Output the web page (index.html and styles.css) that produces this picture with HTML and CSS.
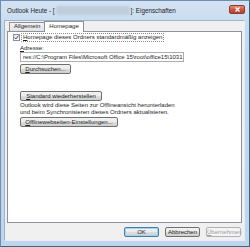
FILE: index.html
```html
<!DOCTYPE html>
<html>
<head>
<meta charset="utf-8">
<link rel="stylesheet" href="styles.css">
</head>
<body>
<div class="win">
  <div class="titlebar">
    <span class="title">Outlook Heute - [<span class="blur"></span>]: Eigenschaften</span>
    <div class="close"><svg width="9" height="5" viewBox="0 0 9 5"><path d="M2.5 0.5 L6.5 4.5 M6.5 0.5 L2.5 4.5" stroke="#fff" stroke-width="1.3"/></svg></div>
  </div>
  <div class="client">
    <div class="tabs">
      <div class="tab">Allgemein</div>
      <div class="tab active">Homepage</div>
    </div>
    <div class="panel">
      <div class="check">
        <span class="box"><svg width="5" height="5" viewBox="0 0 5 5"><path d="M0.6 2.6 L1.9 4 L4.4 0.7" stroke="#2b4ea8" stroke-width="1" fill="none"/></svg></span>
        <span class="focus"><u>H</u>omepage dieses Ordners standardmäßig anzeigen</span>
      </div>
      <div class="indent">
        <div class="lbl"><u>A</u>dresse:</div>
        <div class="input">res://C:\Program Files\Microsoft Office 15\root\office15\1031</div>
        <div class="btn b-browse"><u>D</u>urchsuchen...</div>
        <div class="btn b-std"><u>S</u>tandard wiederherstellen</div>
        <p class="info">Outlook wird diese Seiten zur Offlineansicht herunterladen<br>und beim Synchronisieren dieses Ordners aktualisieren.</p>
        <div class="btn b-off"><u>O</u>fflinewebseiten-Einstellungen...</div>
      </div>
    </div>
    <div class="footer">
      <div class="btn fbtn default">OK</div>
      <div class="btn fbtn">Abbrechen</div>
      <div class="btn fbtn disabled"><u>Ü</u>bernehmen</div>
    </div>
  </div>
</div>
</body>
</html>
```
FILE: styles.css
```css
html, body {
  margin: 0;
  padding: 0;
  width: 250px;
  height: 247px;
  overflow: hidden;
  background: #c7dbf0;
}
body {
  font-family: "Liberation Sans", Arial, sans-serif;
  font-size: 6px;
  color: #1e1e1e;
}
.win {
  box-sizing: border-box;
  width: 250px;
  height: 247px;
  border: 1px solid #6f8fae;
  border-right-color: #2f6e80;
  border-bottom-color: #2f6e80;
  background: linear-gradient(#d4e3f3, #c4d9ef 30px, #bfd5ed);
  display: flex;
  flex-direction: column;
  padding: 0 4px 5px 3px;
}
.titlebar {
  height: 19px;
  flex: none;
  display: flex;
  align-items: center;
  justify-content: space-between;
  padding-left: 3px;
}
.title {
  font-size: 6.3px;
  color: #1b1b1b;
  display: flex;
  align-items: center;
  margin-top: -1px;
}
.blur {
  display: inline-block;
  width: 74px;
  height: 9px;
  background: #bfcedd;
  border-radius: 2px;
  filter: blur(1px);
  margin: 0 1px;
}
.close {
  width: 14px;
  height: 7px;
  background: linear-gradient(#e6907f, #c9513d 55%, #b8412c);
  border: 1px solid #8a3a2e;
  border-radius: 2px;
  display: flex;
  align-items: center;
  justify-content: center;
  margin-top: -3px;
}
.client {
  flex: 1;
  background: #f0f0f0;
  border: 1px solid #9fb3c9;
  border-bottom-color: #e5eef7;
  border-right-color: #e5eef7;
  padding: 1px 2px 0 2px;
  display: flex;
  flex-direction: column;
}
.tabs {
  display: flex;
  height: 9px;
  padding-left: 2px;
  align-items: flex-end;
  position: relative;
  z-index: 1;
}
.tab {
  height: 8px;
  line-height: 7px;
  padding: 0 4px;
  border: 1px solid #8d929b;
  border-bottom: none;
  background: linear-gradient(#f2f2f2, #e3e3e3);
  font-size: 6px;
  margin-top: 1px;
}
.tab.active {
  height: 10px;
  background: #fff;
  margin-left: -1px;
  margin-bottom: -1px;
  padding: 0 4px;
  line-height: 9px;
}
.panel {
  flex: 1;
  background: #fff;
  border: 1px solid #8d929b;
  padding: 1px 5px;
}
.check {
  display: flex;
  align-items: center;
  height: 9px;
}
.box {
  width: 5px;
  height: 5px;
  border: 1px solid #8e8f8f;
  background: linear-gradient(#e8e8e8, #f8f8f8);
  display: flex;
  align-items: center;
  justify-content: center;
  margin-right: 1px;
}
.focus {
  border: 1px dotted #8a8a8a;
  padding: 0 1px;
  line-height: 7px;
}
.indent {
  padding-left: 7px;
}
.lbl {
  margin-top: 2px;
  height: 8px;
  line-height: 8px;
}
.input {
  width: 158px;
  height: 8px;
  line-height: 8px;
  border: 1px solid #abadb3;
  padding: 0 2px;
  white-space: nowrap;
  overflow: hidden;
}
.btn {
  box-sizing: border-box;
  height: 10px;
  line-height: 8px;
  border: 1px solid #707070;
  border-radius: 2px;
  background: linear-gradient(#f2f2f2, #ebebeb 50%, #dddddd 51%, #cfcfcf);
  text-align: center;
  font-size: 6px;
  white-space: nowrap;
}
.b-browse {
  width: 51px;
  margin-top: 2px;
}
.b-std {
  width: 82px;
  margin-top: 17px;
}
.info {
  margin: 1px 0 0 0;
  line-height: 7px;
}
.b-off {
  width: 98px;
  margin-top: 1px;
}
.footer {
  height: 17px;
  display: flex;
  justify-content: flex-end;
  align-items: center;
  gap: 6px;
  padding-right: 1px;
}
.fbtn {
  width: 35px;
}
.fbtn.default {
  border-color: #3c7fb1;
  box-shadow: inset 0 0 0 1px #9fd5f5;
}
.fbtn.disabled {
  color: #9c9c9c;
  border-color: #adb2b5;
  background: #f4f4f4;
}
```
